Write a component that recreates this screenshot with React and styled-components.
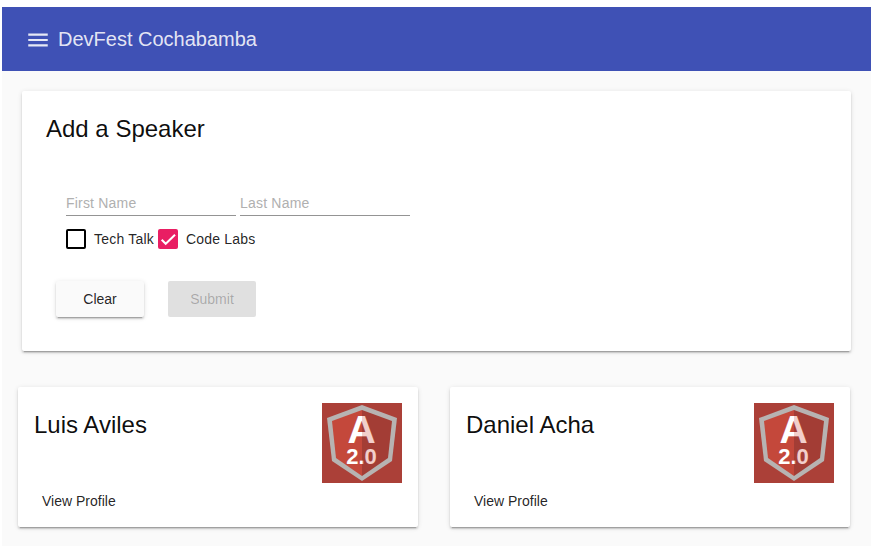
import React from "react";
import styled, { createGlobalStyle } from "styled-components";

const speakers = ["Luis Aviles", "Daniel Acha"];

const cardShadow =
    "0 3px 1px -2px rgba(0, 0, 0, 0.2), 0 2px 2px 0 rgba(0, 0, 0, 0.14), 0 1px 5px 0 rgba(0, 0, 0, 0.12)";

const GlobalStyle = createGlobalStyle`
    html, body {
        margin: 0;
        padding: 0;
        background: #fff;
        font-family: "Liberation Sans", Arial, sans-serif;
    }
`;

const Page = styled.div`
    margin: 7px 8px 0 2px;
    height: 539px;
    background: #fafafa;
    overflow: hidden;
`;

const Toolbar = styled.header`
    display: flex;
    align-items: center;
    height: 64px;
    padding: 0 16px;
    gap: 7px;
    background: #3f51b5;
    color: rgba(255, 255, 255, 0.87);
    font-size: 20px;
`;

const MenuIcon = styled.svg`
    width: 26px;
    height: 26px;
    margin: 2px 0 0 7px;
    fill: rgba(255, 255, 255, 0.87);
`;

const Content = styled.main`
    display: flex;
    flex-direction: column;
    gap: 36px;
    padding: 20px 20px 0 16px;
`;

const FormCard = styled.section`
    display: flex;
    flex-direction: column;
    height: 260px;
    margin-left: 4px;
    box-sizing: border-box;
    padding: 24px;
    background: #fff;
    border-radius: 2px;
    box-shadow: ${cardShadow};
`;

const Title = styled.h2`
    margin: 0;
    font-size: 24px;
    font-weight: 400;
    line-height: 28px;
    color: rgba(0, 0, 0, 0.95);
`;

const SpeakerName = styled(Title)`
    margin-top: 8px;
`;

const Fields = styled.div`
    display: flex;
    gap: 4px;
    margin: 46px 0 0 20px;
`;

const Field = styled.div`
    width: 170px;
    height: 27px;
    box-sizing: border-box;
    border-bottom: 1px solid #949494;
    font-size: 14px;
    line-height: 28px;
    letter-spacing: 0.2px;
    color: #b0b0b0;
`;

const Checks = styled.div`
    display: flex;
    align-items: center;
    margin: 13px 0 0 20px;
    font-size: 14px;
    letter-spacing: 0.2px;
    color: rgba(0, 0, 0, 0.87);
`;

const Check = styled.label`
    display: flex;
    align-items: center;
    gap: 8px;
    margin-right: 4px;
`;

const Box = styled.span`
    display: grid;
    place-items: center;
    width: 20px;
    height: 20px;
    box-sizing: border-box;
    border-radius: 2px;
    border: ${(props) => (props.$checked ? "none" : "2px solid #000")};
    background: ${(props) => (props.$checked ? "#e91e63" : "transparent")};
`;

const Actions = styled.div`
    display: flex;
    gap: 24px;
    margin: 32px 0 0 10px;
`;

const Button = styled.button`
    width: 88px;
    height: 36px;
    padding: 0;
    border: none;
    border-radius: 2px;
    font-family: inherit;
    font-size: 14px;
    color: ${(props) => (props.disabled ? "rgba(0, 0, 0, 0.26)" : "rgba(0, 0, 0, 0.87)")};
    background: ${(props) => (props.disabled ? "rgba(0, 0, 0, 0.12)" : "#fafafa")};
    box-shadow: ${(props) => (props.disabled ? "none" : cardShadow)};
`;

const SpeakerGrid = styled.div`
    display: grid;
    grid-template-columns: 400px 400px;
    gap: 32px;
`;

const SpeakerCard = styled.article`
    display: flex;
    flex-direction: column;
    justify-content: space-between;
    height: 140px;
    box-sizing: border-box;
    padding: 16px 16px 14px;
    background: #fff;
    border-radius: 2px;
    box-shadow: ${cardShadow};
`;

const CardHead = styled.div`
    display: flex;
    justify-content: space-between;
`;

const CardAction = styled.div`
    margin-left: 8px;
    font-size: 14px;
    line-height: 24px;
    color: rgba(0, 0, 0, 0.87);
`;

const AngularLogo = ({ id }) => (
    <svg width="80" height="80" viewBox="0 0 80 80">
        <defs>
            <linearGradient id={id} gradientUnits="userSpaceOnUse" x1="0" y1="0" x2="80" y2="0">
                <stop offset="0.5" stopColor="#fff" />
                <stop offset="0.5" stopColor="#f2cfcb" />
            </linearGradient>
        </defs>
        <rect width="80" height="80" fill="#ab4038" />
        <path d="M40 2 L75 15 L70 58 L40 78 L10 58 L5 15 Z" fill="#b7b3b2" />
        <path d="M40 7 L40 73 L14 55 L10 18 Z" fill="#c4483b" />
        <path d="M40 7 L70 18 L66 55 L40 73 Z" fill="#a33d35" />
        <text x="39.5" y="40" textAnchor="middle" fontFamily="Liberation Sans, sans-serif" fontWeight="700" fontSize="39" fill={`url(#${id})`}>A</text>
        <text x="39.5" y="61" textAnchor="middle" fontFamily="Liberation Sans, sans-serif" fontWeight="700" fontSize="22" fill={`url(#${id})`}>2.0</text>
    </svg>
);

export default function App() {
    return (
        <>
            <GlobalStyle />
            <Page>
                <Toolbar>
                    <MenuIcon viewBox="0 0 24 24">
                        <path d="M3 18h18v-2H3v2zm0-5h18v-2H3v2zm0-7v2h18V6H3z" />
                    </MenuIcon>
                    DevFest Cochabamba
                </Toolbar>
                <Content>
                    <FormCard>
                        <Title>Add a Speaker</Title>
                        <Fields>
                            <Field>First Name</Field>
                            <Field>Last Name</Field>
                        </Fields>
                        <Checks>
                            <Check>
                                <Box />
                                Tech Talk
                            </Check>
                            <Check>
                                <Box $checked>
                                    <svg width="20" height="20" viewBox="0 0 20 20">
                                        <path d="M3.7 10.8 L7.7 14.8 L17 5.8" fill="none" stroke="#fff" strokeWidth="2" />
                                    </svg>
                                </Box>
                                Code Labs
                            </Check>
                        </Checks>
                        <Actions>
                            <Button>Clear</Button>
                            <Button disabled>Submit</Button>
                        </Actions>
                    </FormCard>
                    <SpeakerGrid>
                        {speakers.map((name, i) => (
                            <SpeakerCard key={name}>
                                <CardHead>
                                    <SpeakerName>{name}</SpeakerName>
                                    <AngularLogo id={`logo-fill-${i}`} />
                                </CardHead>
                                <CardAction>View Profile</CardAction>
                            </SpeakerCard>
                        ))}
                    </SpeakerGrid>
                </Content>
            </Page>
        </>
    );
}
